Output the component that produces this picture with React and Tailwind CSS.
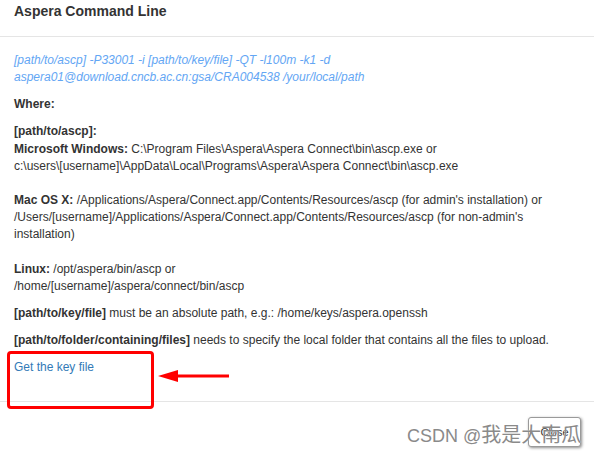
export default function App() {
  const font = { fontFamily: '"Liberation Sans", Arial, sans-serif' };
  return (
    <div className="relative w-[594px] h-[455px] bg-white overflow-hidden text-[#333]" style={font}>
      <div className="h-[37px] border-b border-[#e5e5e5] px-[14px] pt-[2px]">
        <h4 className="text-[14px] leading-[18px] font-bold text-[#333]">Aspera Command Line</h4>
      </div>
      <div className="px-[14px] pt-[15px] text-[12px] leading-[17.14px] h-[364px]">
        <p className="italic text-[#63a6f4] mb-[10px]">
          [path/to/ascp] -P33001 -i [path/to/key/file] -QT -l100m -k1 -d
          <br />
          aspera01@download.cncb.ac.cn:gsa/CRA004538 /your/local/path
        </p>
        <p className="font-bold mb-[10px]">Where:</p>
        <p className="mb-[10px]">
          <b>[path/to/ascp]:</b>
          <br />
          <b>Microsoft Windows:</b> C:\Program Files\Aspera\Aspera Connect\bin\ascp.exe or
          <br />
          c:\users\[username]\AppData\Local\Programs\Aspera\Aspera Connect\bin\ascp.exe
          <br />
          <br />
          <b>Mac OS X:</b> /Applications/Aspera/Connect.app/Contents/Resources/ascp (for admin's installation) or
          /Users/[username]/Applications/Aspera/Connect.app/Contents/Resources/ascp (for non-admin's installation)
          <br />
          <br />
          <b>Linux:</b> /opt/aspera/bin/ascp or
          <br />
          /home/[username]/aspera/connect/bin/ascp
        </p>
        <p className="mb-[10px]">
          <b>[path/to/key/file]</b> must be an absolute path, e.g.: /home/keys/aspera.openssh
        </p>
        <p className="mb-[10px]">
          <b>[path/to/folder/containing/files]</b> needs to specify the local folder that contains all the files to upload.
        </p>
        <p>
          <a className="text-[#337ab7]">Get the key file</a>
        </p>
      </div>
      <div className="border-t border-[#e5e5e5] flex justify-end pr-[13px] pt-[15px]">
        <button className="w-[53px] h-[30px] border border-[#9a9a9a] rounded-[3px] bg-white text-[11px] text-[#333] shadow-[1px_1px_3px_rgba(0,0,0,0.45)]">
          Close
        </button>
      </div>

      {/* annotations */}
      <div className="absolute left-[7px] top-[351px] w-[147px] h-[58px] border-[3px] border-[#ff0000] rounded-[4px]"></div>
      <svg className="absolute left-[156px] top-[368px]" width="76" height="16" viewBox="0 0 76 16">
        <line x1="18" y1="8" x2="73" y2="8" stroke="#ff0000" strokeWidth="3" />
        <polygon points="2,8 22,2 22,14" fill="#ff0000" />
      </svg>
      <div
        className="absolute left-[407px] top-[420px] leading-[28px] text-[#8a8a8a] whitespace-nowrap"
        style={{ fontFamily: '"Liberation Sans", Arial, "Noto Sans CJK SC", sans-serif', textShadow: '0 0 1px #fff' }}
      >
        <span className="text-[18px]">CSDN @</span>
        <span className="text-[20px]" style={{ fontFamily: '"Noto Sans CJK SC", sans-serif' }}>我是大南瓜</span>
      </div>
    </div>
  );
}
